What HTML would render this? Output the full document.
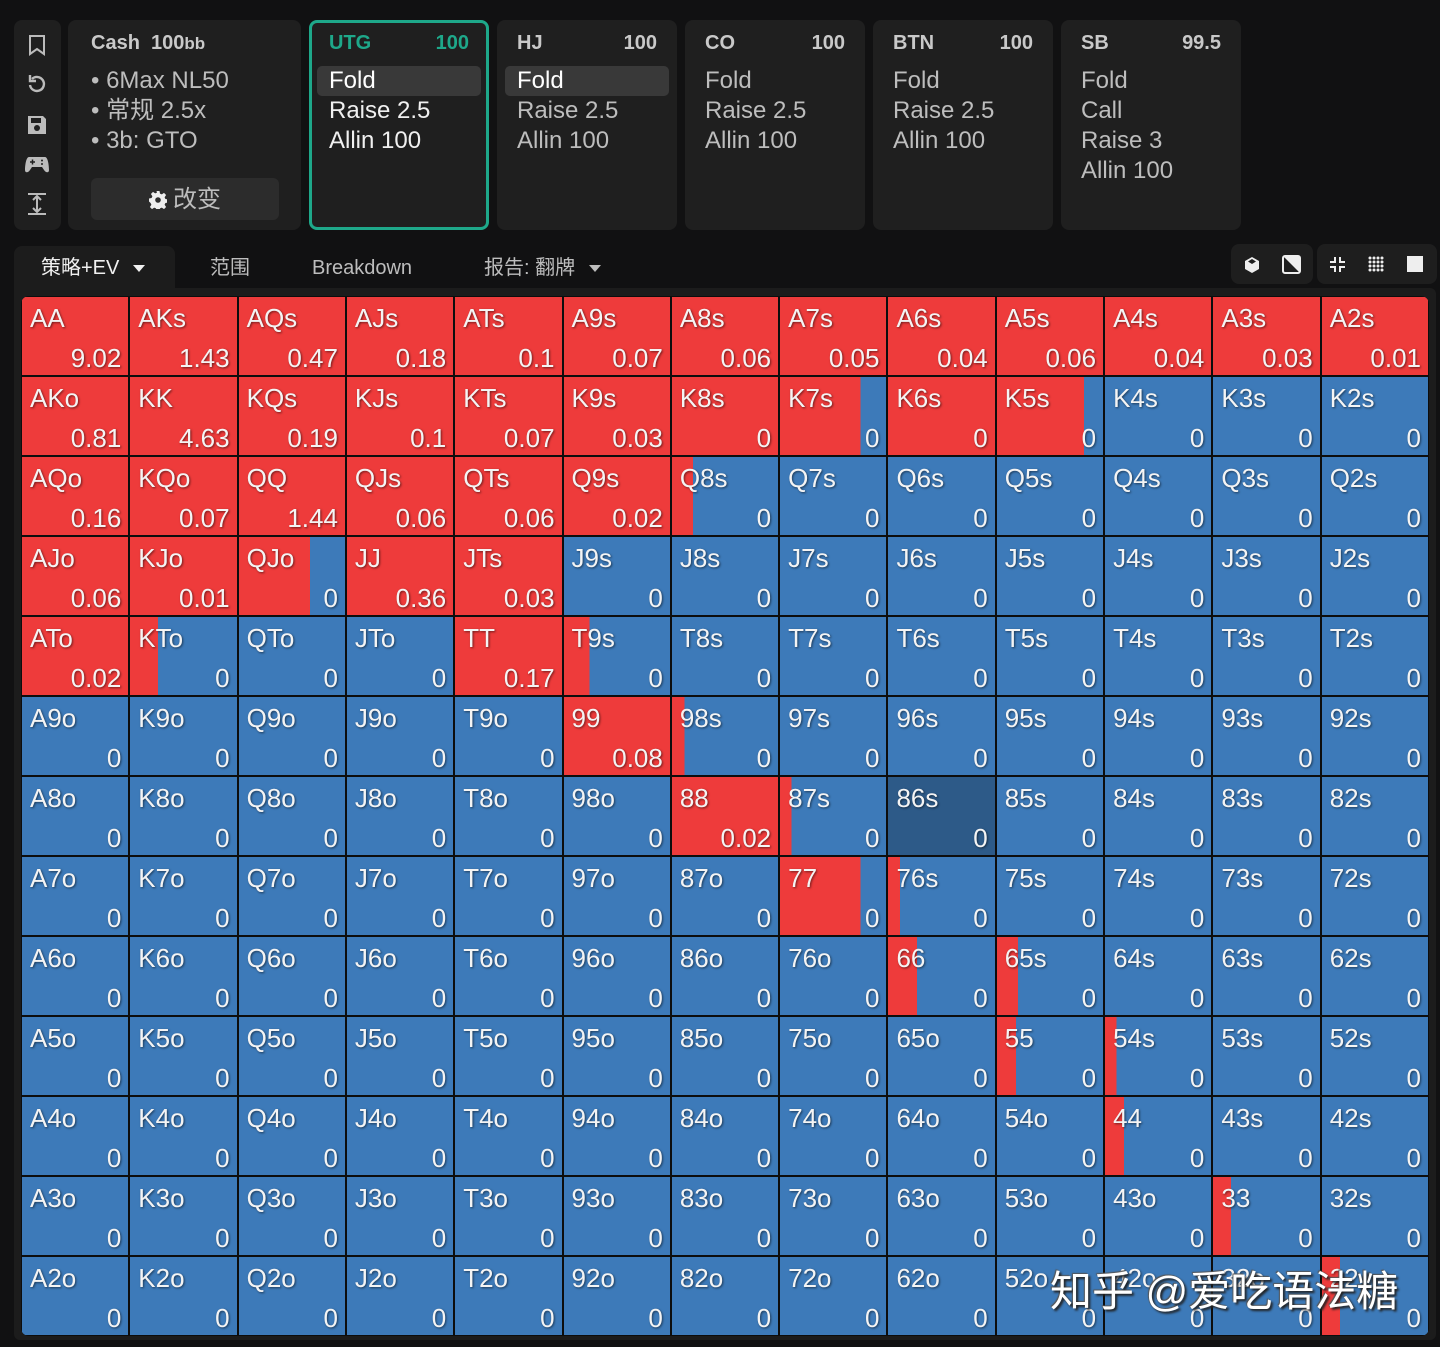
<!DOCTYPE html>
<html><head><meta charset="utf-8"><style>
*{box-sizing:border-box;margin:0;padding:0}
body{width:1440px;height:1347px;background:#111112;font-family:"Liberation Sans","Noto Sans CJK SC",sans-serif;position:relative;overflow:hidden;color:#c8c8c8}
.p{position:absolute;top:20px;height:210px;background:#1f1f1f;border-radius:8px}
.side{left:14px;width:47px}
.side svg{position:absolute;left:13px}
.info{left:68px;width:233px;padding:10px 0 0 23px}
.info h4{font-size:20px;color:#c9c9c9;font-weight:bold;height:36px;line-height:26px}
.info h4 small{font-size:17px}
.info div{font-size:24px;line-height:30px;color:#bdbdbd}
.btn{position:absolute;left:23px;top:158px;width:188px;height:42px;background:#2c2c2c;border-radius:6px;text-align:center;font-size:21px;color:#e0e0e0;padding-top:7px;line-height:28px}
.btn svg{vertical-align:-2px;margin-right:6px}
.pos{width:180px;padding:10px 8px 0 8px}
.pos .h{display:flex;justify-content:space-between;font-size:20px;font-weight:bold;color:#c9c9c9;padding:0 12px 0 12px;height:34px;line-height:26px}
.pos .o{font-size:24px;line-height:30px;padding-left:12px;color:#bdbdbd;height:30px;border-radius:5px;position:relative;top:2px}
.pos .o.s{background:#393939;color:#fff}
.utg{border:3px solid #1ea88a;background:#1f1f1f;padding:7px 5px 0 5px}
.utg .h{color:#1ea88a}
.utg .o{color:#f0f0f0}
.tab{position:absolute;top:0;height:44px;line-height:44px;font-size:20px;color:#bdbdbd}
.tri{display:inline-block;width:0;height:0;border-left:6px solid transparent;border-right:6px solid transparent;border-top:7px solid currentColor;vertical-align:middle;margin-left:14px}
.tb{position:absolute;top:244px;height:40px;background:#1e1e1e;border-radius:8px}
.gridwrap{position:absolute;left:14px;top:288px;width:1422px;height:1052px;background:#1c1c1c;border-radius:6px}
.grid{position:absolute;left:21px;top:296px;width:1408px;height:1040px;background:#0d0d0d;display:grid;grid-template-columns:repeat(13,1fr);grid-template-rows:repeat(13,1fr);gap:2px;padding:1px;border-radius:8px;overflow:hidden}
.grid div{background:#3d7ab9;position:relative;color:#f4f4f4;text-shadow:1px 1px 2px rgba(0,0,0,.55);font-size:26px}
.grid div.r{background:#ee3b3b}
.grid b{font-weight:normal;position:absolute;left:8px;top:6px}
.grid i{font-style:normal;position:absolute;right:7px;bottom:1px}
.grid div.d{background:#2d5a88}
.wm{position:absolute;left:1050px;top:1258px;font-size:42px;color:#fff;text-shadow:2px 2px 2px #222,-1px -1px 1px #555;font-family:"Liberation Sans","Noto Sans CJK SC",sans-serif;white-space:nowrap}
</style></head><body>
<div class="p side">
<svg style="top:14px" width="20" height="22" viewBox="0 0 20 22"><path d="M3 2h14v18l-7-5-7 5z" fill="none" stroke="#bbb" stroke-width="2"/></svg>
<svg style="top:53px" width="20" height="22" viewBox="0 0 20 22"><path d="M5 6a7 7 0 1 1-2 6" fill="none" stroke="#bbb" stroke-width="2.4"/><path d="M3 2v6h6" fill="none" stroke="#bbb" stroke-width="2.4"/></svg>
<svg style="top:94px" width="20" height="22" viewBox="0 0 20 22"><path d="M1 2h15l3 3v15H1z" fill="#bbb"/><rect x="4" y="4" width="10" height="5" fill="#1f1f1f"/><circle cx="10" cy="14" r="3" fill="#1f1f1f"/></svg>
<svg style="top:135px;left:11px" width="24" height="18" viewBox="0 0 24 18"><path d="M4 2h16c3 0 4 9 4 13 0 3-3 3-5 0l-2-3H7l-2 3c-2 3-5 3-5 0 0-4 1-13 4-13z" fill="#bbb"/><path d="M5 7h5M7.5 4.5v5" stroke="#1f1f1f" stroke-width="1.5"/><circle cx="17" cy="5.5" r="1" fill="#1f1f1f"/><circle cx="17" cy="9" r="1" fill="#1f1f1f"/></svg>
<svg style="top:172px" width="20" height="24" viewBox="0 0 20 24"><path d="M1 2h18M1 22h18M10 5v14M6 8l4-4 4 4M6 16l4 4 4-4" fill="none" stroke="#bbb" stroke-width="2"/></svg>
</div>
<div class="p info"><h4>Cash&nbsp; 100<small>bb</small></h4>
<div>• 6Max NL50</div><div>• 常规 2.5x</div><div>• 3b: GTO</div>
<div class="btn"><svg width="18" height="18" viewBox="0 0 18 18"><path d="M7.5 0h3l.5 2.6 1.8.8 2.2-1.5 2.1 2.1-1.5 2.2.8 1.8 2.6.5v3l-2.6.5-.8 1.8 1.5 2.2-2.1 2.1-2.2-1.5-1.8.8-.5 2.6h-3l-.5-2.6-1.8-.8-2.2 1.5-2.1-2.1 1.5-2.2-.8-1.8L0 10.5v-3l2.6-.5.8-1.8-1.5-2.2 2.1-2.1 2.2 1.5 1.8-.8z" fill="#eee"/><circle cx="9" cy="9" r="2.8" fill="#2c2c2c"/></svg>改变</div></div>
<div class="p pos utg" style="left:309px"><div class="h"><span>UTG</span><span>100</span></div><div class="o s">Fold</div><div class="o">Raise 2.5</div><div class="o">Allin 100</div></div>
<div class="p pos" style="left:497px"><div class="h"><span>HJ</span><span>100</span></div><div class="o s">Fold</div><div class="o">Raise 2.5</div><div class="o">Allin 100</div></div>
<div class="p pos" style="left:685px"><div class="h"><span>CO</span><span>100</span></div><div class="o">Fold</div><div class="o">Raise 2.5</div><div class="o">Allin 100</div></div>
<div class="p pos" style="left:873px"><div class="h"><span>BTN</span><span>100</span></div><div class="o">Fold</div><div class="o">Raise 2.5</div><div class="o">Allin 100</div></div>
<div class="p pos" style="left:1061px"><div class="h"><span>SB</span><span>99.5</span></div><div class="o">Fold</div><div class="o">Call</div><div class="o">Raise 3</div><div class="o">Allin 100</div></div>

<div class="gridwrap"></div>
<div style="position:absolute;left:14px;top:246px;width:161px;height:50px;background:#1c1c1c;border-radius:8px 8px 0 0"></div>
<div class="tab" style="left:41px;top:246px;color:#f0f0f0">策略+EV<span class="tri"></span></div>
<div class="tab" style="left:210px;top:246px">范围</div>
<div class="tab" style="left:312px;top:246px">Breakdown</div>
<div class="tab" style="left:484px;top:246px">报告:&nbsp;翻牌<span class="tri"></span></div>
<div class="tb" style="left:1231px;width:82px"></div>
<div class="tb" style="left:1317px;width:120px"></div>
<svg style="position:absolute;left:1243px;top:256px" width="18" height="18" viewBox="0 0 18 18"><path d="M9 1l7 4v8l-7 4-7-4V5z" fill="#eee"/><path d="M9 3l4 2.5-4 2.5-4-2.5z" fill="#1e1e1e"/></svg>
<svg style="position:absolute;left:1282px;top:255px" width="19" height="19" viewBox="0 0 19 19"><rect x="1" y="1" width="17" height="17" rx="2" fill="none" stroke="#eee" stroke-width="2"/><path d="M1 1h17v17z" fill="#eee"/></svg>
<svg style="position:absolute;left:1330px;top:257px" width="15" height="15" viewBox="0 0 15 15"><path d="M5 0v5H0M10 0v5h5M5 15v-5H0M10 15v-5h5" fill="none" stroke="#eee" stroke-width="2"/></svg>
<svg style="position:absolute;left:1368px;top:256px" width="16" height="16" viewBox="0 0 16 16" fill="#eee"><circle cx="2" cy="2" r="1.5"/><circle cx="6" cy="2" r="1.5"/><circle cx="10" cy="2" r="1.5"/><circle cx="14" cy="2" r="1.5"/><circle cx="2" cy="6" r="1.5"/><circle cx="6" cy="6" r="1.5"/><circle cx="10" cy="6" r="1.5"/><circle cx="14" cy="6" r="1.5"/><circle cx="2" cy="10" r="1.5"/><circle cx="6" cy="10" r="1.5"/><circle cx="10" cy="10" r="1.5"/><circle cx="14" cy="10" r="1.5"/><circle cx="2" cy="14" r="1.5"/><circle cx="6" cy="14" r="1.5"/><circle cx="10" cy="14" r="1.5"/><circle cx="14" cy="14" r="1.5"/></svg>
<div style="position:absolute;left:1407px;top:256px;width:16px;height:16px;background:#eee"></div>

<div class="grid">
<div class="r"><b>AA</b><i>9.02</i></div><div class="r"><b>AKs</b><i>1.43</i></div><div class="r"><b>AQs</b><i>0.47</i></div><div class="r"><b>AJs</b><i>0.18</i></div><div class="r"><b>ATs</b><i>0.1</i></div><div class="r"><b>A9s</b><i>0.07</i></div><div class="r"><b>A8s</b><i>0.06</i></div><div class="r"><b>A7s</b><i>0.05</i></div><div class="r"><b>A6s</b><i>0.04</i></div><div class="r"><b>A5s</b><i>0.06</i></div><div class="r"><b>A4s</b><i>0.04</i></div><div class="r"><b>A3s</b><i>0.03</i></div><div class="r"><b>A2s</b><i>0.01</i></div>
<div class="r"><b>AKo</b><i>0.81</i></div><div class="r"><b>KK</b><i>4.63</i></div><div class="r"><b>KQs</b><i>0.19</i></div><div class="r"><b>KJs</b><i>0.1</i></div><div class="r"><b>KTs</b><i>0.07</i></div><div class="r"><b>K9s</b><i>0.03</i></div><div class="r"><b>K8s</b><i>0</i></div><div style="background:linear-gradient(90deg,#ee3b3b 76%,#3d7ab9 0)"><b>K7s</b><i>0</i></div><div class="r"><b>K6s</b><i>0</i></div><div style="background:linear-gradient(90deg,#ee3b3b 82%,#3d7ab9 0)"><b>K5s</b><i>0</i></div><div><b>K4s</b><i>0</i></div><div><b>K3s</b><i>0</i></div><div><b>K2s</b><i>0</i></div>
<div class="r"><b>AQo</b><i>0.16</i></div><div class="r"><b>KQo</b><i>0.07</i></div><div class="r"><b>QQ</b><i>1.44</i></div><div class="r"><b>QJs</b><i>0.06</i></div><div class="r"><b>QTs</b><i>0.06</i></div><div class="r"><b>Q9s</b><i>0.02</i></div><div style="background:linear-gradient(90deg,#ee3b3b 20%,#3d7ab9 0)"><b>Q8s</b><i>0</i></div><div><b>Q7s</b><i>0</i></div><div><b>Q6s</b><i>0</i></div><div><b>Q5s</b><i>0</i></div><div><b>Q4s</b><i>0</i></div><div><b>Q3s</b><i>0</i></div><div><b>Q2s</b><i>0</i></div>
<div class="r"><b>AJo</b><i>0.06</i></div><div class="r"><b>KJo</b><i>0.01</i></div><div style="background:linear-gradient(90deg,#ee3b3b 67%,#3d7ab9 0)"><b>QJo</b><i>0</i></div><div class="r"><b>JJ</b><i>0.36</i></div><div class="r"><b>JTs</b><i>0.03</i></div><div><b>J9s</b><i>0</i></div><div><b>J8s</b><i>0</i></div><div><b>J7s</b><i>0</i></div><div><b>J6s</b><i>0</i></div><div><b>J5s</b><i>0</i></div><div><b>J4s</b><i>0</i></div><div><b>J3s</b><i>0</i></div><div><b>J2s</b><i>0</i></div>
<div class="r"><b>ATo</b><i>0.02</i></div><div style="background:linear-gradient(90deg,#ee3b3b 26%,#3d7ab9 0)"><b>KTo</b><i>0</i></div><div><b>QTo</b><i>0</i></div><div><b>JTo</b><i>0</i></div><div class="r"><b>TT</b><i>0.17</i></div><div style="background:linear-gradient(90deg,#ee3b3b 24%,#3d7ab9 0)"><b>T9s</b><i>0</i></div><div><b>T8s</b><i>0</i></div><div><b>T7s</b><i>0</i></div><div><b>T6s</b><i>0</i></div><div><b>T5s</b><i>0</i></div><div><b>T4s</b><i>0</i></div><div><b>T3s</b><i>0</i></div><div><b>T2s</b><i>0</i></div>
<div><b>A9o</b><i>0</i></div><div><b>K9o</b><i>0</i></div><div><b>Q9o</b><i>0</i></div><div><b>J9o</b><i>0</i></div><div><b>T9o</b><i>0</i></div><div class="r"><b>99</b><i>0.08</i></div><div style="background:linear-gradient(90deg,#ee3b3b 12%,#3d7ab9 0)"><b>98s</b><i>0</i></div><div><b>97s</b><i>0</i></div><div><b>96s</b><i>0</i></div><div><b>95s</b><i>0</i></div><div><b>94s</b><i>0</i></div><div><b>93s</b><i>0</i></div><div><b>92s</b><i>0</i></div>
<div><b>A8o</b><i>0</i></div><div><b>K8o</b><i>0</i></div><div><b>Q8o</b><i>0</i></div><div><b>J8o</b><i>0</i></div><div><b>T8o</b><i>0</i></div><div><b>98o</b><i>0</i></div><div class="r"><b>88</b><i>0.02</i></div><div style="background:linear-gradient(90deg,#ee3b3b 11%,#3d7ab9 0)"><b>87s</b><i>0</i></div><div class="d"><b>86s</b><i>0</i></div><div><b>85s</b><i>0</i></div><div><b>84s</b><i>0</i></div><div><b>83s</b><i>0</i></div><div><b>82s</b><i>0</i></div>
<div><b>A7o</b><i>0</i></div><div><b>K7o</b><i>0</i></div><div><b>Q7o</b><i>0</i></div><div><b>J7o</b><i>0</i></div><div><b>T7o</b><i>0</i></div><div><b>97o</b><i>0</i></div><div><b>87o</b><i>0</i></div><div style="background:linear-gradient(90deg,#ee3b3b 76%,#3d7ab9 0)"><b>77</b><i>0</i></div><div style="background:linear-gradient(90deg,#ee3b3b 11%,#3d7ab9 0)"><b>76s</b><i>0</i></div><div><b>75s</b><i>0</i></div><div><b>74s</b><i>0</i></div><div><b>73s</b><i>0</i></div><div><b>72s</b><i>0</i></div>
<div><b>A6o</b><i>0</i></div><div><b>K6o</b><i>0</i></div><div><b>Q6o</b><i>0</i></div><div><b>J6o</b><i>0</i></div><div><b>T6o</b><i>0</i></div><div><b>96o</b><i>0</i></div><div><b>86o</b><i>0</i></div><div><b>76o</b><i>0</i></div><div style="background:linear-gradient(90deg,#ee3b3b 27%,#3d7ab9 0)"><b>66</b><i>0</i></div><div style="background:linear-gradient(90deg,#ee3b3b 20%,#3d7ab9 0)"><b>65s</b><i>0</i></div><div><b>64s</b><i>0</i></div><div><b>63s</b><i>0</i></div><div><b>62s</b><i>0</i></div>
<div><b>A5o</b><i>0</i></div><div><b>K5o</b><i>0</i></div><div><b>Q5o</b><i>0</i></div><div><b>J5o</b><i>0</i></div><div><b>T5o</b><i>0</i></div><div><b>95o</b><i>0</i></div><div><b>85o</b><i>0</i></div><div><b>75o</b><i>0</i></div><div><b>65o</b><i>0</i></div><div style="background:linear-gradient(90deg,#ee3b3b 18%,#3d7ab9 0)"><b>55</b><i>0</i></div><div style="background:linear-gradient(90deg,#ee3b3b 11%,#3d7ab9 0)"><b>54s</b><i>0</i></div><div><b>53s</b><i>0</i></div><div><b>52s</b><i>0</i></div>
<div><b>A4o</b><i>0</i></div><div><b>K4o</b><i>0</i></div><div><b>Q4o</b><i>0</i></div><div><b>J4o</b><i>0</i></div><div><b>T4o</b><i>0</i></div><div><b>94o</b><i>0</i></div><div><b>84o</b><i>0</i></div><div><b>74o</b><i>0</i></div><div><b>64o</b><i>0</i></div><div><b>54o</b><i>0</i></div><div style="background:linear-gradient(90deg,#ee3b3b 18%,#3d7ab9 0)"><b>44</b><i>0</i></div><div><b>43s</b><i>0</i></div><div><b>42s</b><i>0</i></div>
<div><b>A3o</b><i>0</i></div><div><b>K3o</b><i>0</i></div><div><b>Q3o</b><i>0</i></div><div><b>J3o</b><i>0</i></div><div><b>T3o</b><i>0</i></div><div><b>93o</b><i>0</i></div><div><b>83o</b><i>0</i></div><div><b>73o</b><i>0</i></div><div><b>63o</b><i>0</i></div><div><b>53o</b><i>0</i></div><div><b>43o</b><i>0</i></div><div style="background:linear-gradient(90deg,#ee3b3b 17%,#3d7ab9 0)"><b>33</b><i>0</i></div><div><b>32s</b><i>0</i></div>
<div><b>A2o</b><i>0</i></div><div><b>K2o</b><i>0</i></div><div><b>Q2o</b><i>0</i></div><div><b>J2o</b><i>0</i></div><div><b>T2o</b><i>0</i></div><div><b>92o</b><i>0</i></div><div><b>82o</b><i>0</i></div><div><b>72o</b><i>0</i></div><div><b>62o</b><i>0</i></div><div><b>52o</b><i>0</i></div><div><b>42o</b><i>0</i></div><div><b>32o</b><i>0</i></div><div style="background:linear-gradient(90deg,#ee3b3b 17%,#3d7ab9 0)"><b>22</b><i>0</i></div>
</div>
<div class="wm">知乎 @爱吃语法糖</div>
</body></html>
